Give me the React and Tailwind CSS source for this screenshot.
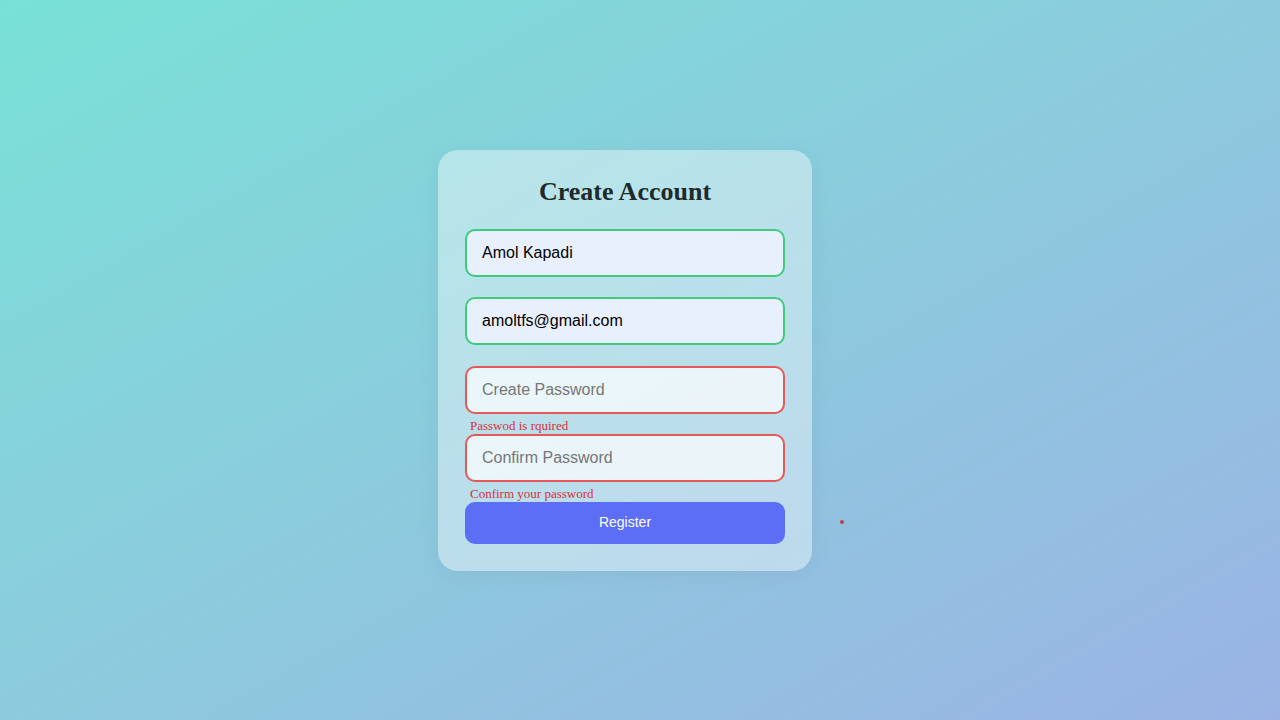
import React from "react";

export default function App() {
  return (
    <div className="w-full h-[720px] bg-gradient-to-br from-[#78e1d6] to-[#9ab3e4] flex items-center justify-center">
      <div className="flex items-end gap-[28px] ml-[2px]">
        <div className="w-[374px] rounded-[20px] bg-white/40 px-[27px] pt-[27px] pb-[27px] shadow-[0_4px_24px_rgba(0,0,0,0.05)]">
          <h1 className="h-[30px] mb-[22px] text-center text-[26px] leading-[30px] font-bold text-[#1f2a2b] [font-family:'Liberation_Serif',serif]">
            Create Account
          </h1>
          <form className="flex flex-col [font-family:'Liberation_Sans',Arial,sans-serif]">
            <input
              defaultValue="Amol Kapadi"
              className="h-[48px] w-full rounded-[10px] border-2 border-[#3fcb7b] bg-[#e8f0fe] px-[15px] text-[16px] text-black outline-none mb-[20px]"
            />
            <input
              defaultValue="amoltfs@gmail.com"
              className="h-[48px] w-full rounded-[10px] border-2 border-[#3fcb7b] bg-[#e8f0fe] px-[15px] text-[16px] text-black outline-none mb-[21px]"
            />
            <input
              placeholder="Create Password"
              type="password"
              className="h-[48px] w-full rounded-[10px] border-2 border-[#e45858] bg-white/70 px-[15px] text-[16px] text-black placeholder:text-[#767676] outline-none"
            />
            <div className="h-[20px] pl-[5px] pt-[4px] text-[13px] leading-[16px] text-[#d7303a] [font-family:'Liberation_Serif',serif]">
              Passwod is rquired
            </div>
            <input
              placeholder="Confirm Password"
              type="password"
              className="h-[48px] w-full rounded-[10px] border-2 border-[#e45858] bg-white/70 px-[15px] text-[16px] text-black placeholder:text-[#767676] outline-none"
            />
            <div className="h-[20px] pl-[5px] pt-[4px] text-[13px] leading-[16px] text-[#d7303a] [font-family:'Liberation_Serif',serif]">
              Confirm your password
            </div>
            <button
              type="button"
              className="h-[42px] w-full rounded-[10px] bg-[#5b6ef5] text-white text-[14px]"
            >
              Register
            </button>
          </form>
        </div>
        <div className="mb-[47px] h-[4px] w-[4px] rounded-full bg-[#cc3a48]" />
      </div>
    </div>
  );
}
